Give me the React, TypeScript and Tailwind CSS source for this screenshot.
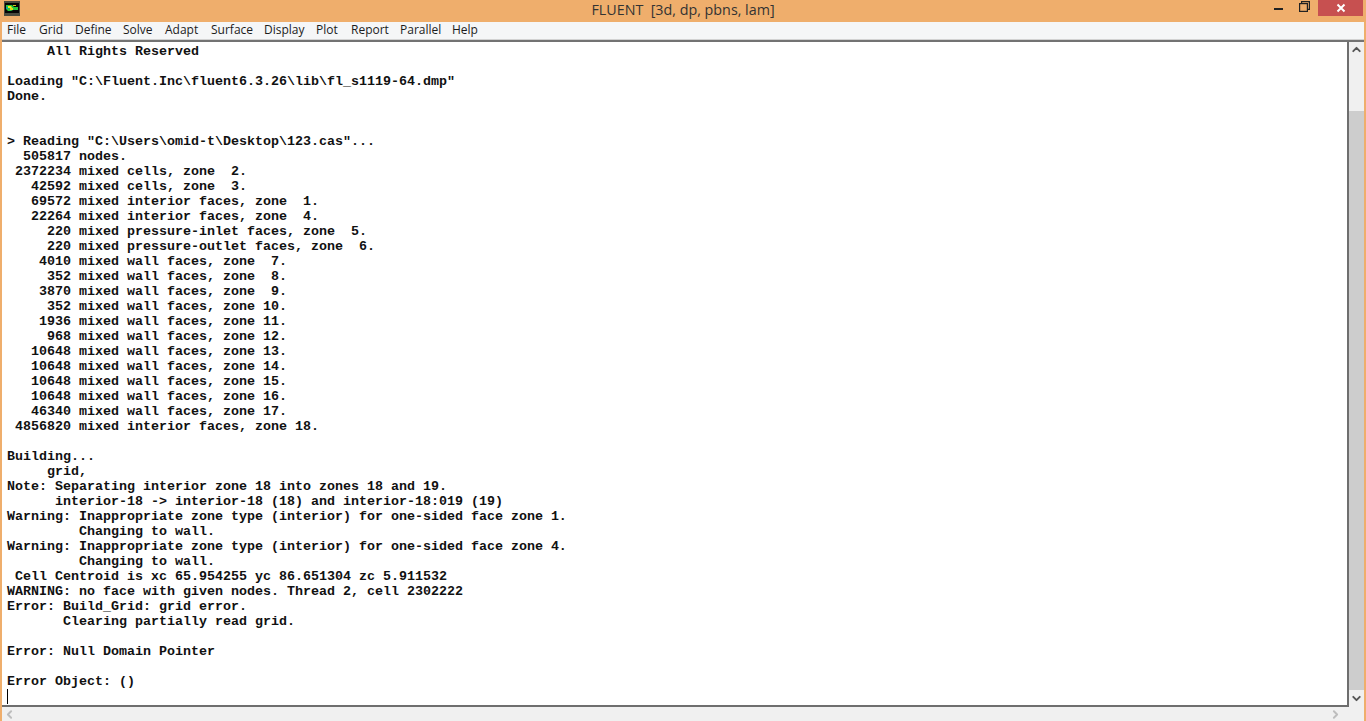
import React from 'react';
import { ChevronUp, ChevronDown, ChevronLeft, ChevronRight } from 'lucide-react';

const menuItems = [
  { label: 'File', width: 'w-[32px]' },
  { label: 'Grid', width: 'w-[36px]' },
  { label: 'Define', width: 'w-[48px]' },
  { label: 'Solve', width: 'w-[42px]' },
  { label: 'Adapt', width: 'w-[46px]' },
  { label: 'Surface', width: 'w-[53px]' },
  { label: 'Display', width: 'w-[52px]' },
  { label: 'Plot', width: 'w-[35px]' },
  { label: 'Report', width: 'w-[49px]' },
  { label: 'Parallel', width: 'w-[52px]' },
  { label: 'Help', width: 'w-[40px]' },
];

const consoleText = `     All Rights Reserved

Loading "C:\\Fluent.Inc\\fluent6.3.26\\lib\\fl_s1119-64.dmp"
Done.


> Reading "C:\\Users\\omid-t\\Desktop\\123.cas"...
  505817 nodes.
 2372234 mixed cells, zone  2.
   42592 mixed cells, zone  3.
   69572 mixed interior faces, zone  1.
   22264 mixed interior faces, zone  4.
     220 mixed pressure-inlet faces, zone  5.
     220 mixed pressure-outlet faces, zone  6.
    4010 mixed wall faces, zone  7.
     352 mixed wall faces, zone  8.
    3870 mixed wall faces, zone  9.
     352 mixed wall faces, zone 10.
    1936 mixed wall faces, zone 11.
     968 mixed wall faces, zone 12.
   10648 mixed wall faces, zone 13.
   10648 mixed wall faces, zone 14.
   10648 mixed wall faces, zone 15.
   10648 mixed wall faces, zone 16.
   46340 mixed wall faces, zone 17.
 4856820 mixed interior faces, zone 18.

Building...
     grid,
Note: Separating interior zone 18 into zones 18 and 19.
      interior-18 -> interior-18 (18) and interior-18:019 (19)
Warning: Inappropriate zone type (interior) for one-sided face zone 1.
         Changing to wall.
Warning: Inappropriate zone type (interior) for one-sided face zone 4.
         Changing to wall.
 Cell Centroid is xc 65.954255 yc 86.651304 zc 5.911532
WARNING: no face with given nodes. Thread 2, cell 2302222
Error: Build_Grid: grid error.
       Clearing partially read grid.

Error: Null Domain Pointer

Error Object: ()`;

function AppIcon() {
  return (
    <svg width="16" height="15" viewBox="0 0 16 15">
      <rect width="16" height="15" fill="#4a4a3e" />
      <rect x="1" y="2" width="14" height="10" fill="#050505" />
      <path d="M2 4h6l2 2h4v3H9L7 10H4L2 8z" fill="#27c93a" />
      <path d="M4 5h3l1 2H4z" fill="#eef01e" />
      <path d="M6 7h3v2H6z" fill="#e0d91a" />
      <path d="M9 4h3v1H9z" fill="#d8c81a" />
      <path d="M2 6h2v2H2z" fill="#12a0a0" />
    </svg>
  );
}

export default function App() {
  return (
    <div className="w-[1366px] h-[721px] overflow-hidden flex flex-col bg-[#efae6c] font-['Liberation_Sans',sans-serif]">
      {/* title bar */}
      <div className="h-[22px] shrink-0 flex items-start">
        <div className="ml-[4px] mt-[1px]">
          <AppIcon />
        </div>
        <div className="flex-1 text-center text-[14.3px] leading-[20px] text-[#333] font-['Open_Sans',sans-serif] pl-[81px]">
          FLUENT &nbsp;[3d, dp, pbns, lam]
        </div>
        <div className="flex items-start">
          <div className="w-[26px] h-[18px] flex items-center justify-center">
            <div className="w-[9px] h-[2px] bg-[#222]" />
          </div>
          <div className="w-[27px] h-[13px] flex items-center justify-center">
            <svg width="11" height="11" viewBox="0 0 11 11" fill="none" stroke="#222" strokeWidth="1.2">
              <rect x="0.6" y="2.6" width="7.8" height="7.8" />
              <path d="M2.6 2.6V0.6h7.8v7.8H8.4" />
            </svg>
          </div>
          <div className="mr-[3px] w-[45px] h-[16px] bg-[#c75050] flex items-center justify-center">
            <svg width="10" height="10" viewBox="0 0 10 10" stroke="#fff" strokeWidth="2">
              <path d="M1.5 1.5l7 7M8.5 1.5l-7 7" />
            </svg>
          </div>
        </div>
      </div>

      <div className="flex-1 min-h-0 mx-[2px] flex flex-col bg-[#f0f0f0] w-[1362px]">
        {/* menu bar */}
        <div className="h-[17px] shrink-0 flex items-center bg-[#f5f6f7] text-[12px] text-[#1c1c1c] font-['Open_Sans',sans-serif] pl-[5px] pb-[2px]">
          {menuItems.map((item) => (
            <div key={item.label} className={`${item.width} shrink-0`}>
              {item.label}
            </div>
          ))}
        </div>
        <div className="h-[1px] shrink-0 bg-[#d2d2d2]" />
        <div className="h-[2px] shrink-0 bg-[#737373]" />

        <div className="flex-1 min-h-0 flex">
          {/* console */}
          <div className="w-[1347px] shrink-0 bg-white border-r-2 border-b-2 border-[#6e6e6e] overflow-hidden pl-[5px]">
            <pre className="font-['Liberation_Mono',monospace] font-bold text-[13.33px] leading-[15px] text-[#111] mt-[1px] pt-[1px] whitespace-pre">
              {consoleText}
            </pre>
            <div className="w-[1px] h-[15px] bg-black" />
          </div>

          {/* vertical scrollbar */}
          <div className="flex-1 flex flex-col items-center">
            <div className="h-[15px] shrink-0 flex items-center">
              <ChevronUp size={13} strokeWidth={3.5} color="#555" />
            </div>
            <div className="h-[54px] shrink-0" />
            <div className="w-full flex-1 bg-[#cdcdcd]" />
            <div className="h-[17px] shrink-0 flex items-center">
              <ChevronDown size={13} strokeWidth={3.5} color="#555" />
            </div>
          </div>
        </div>

        {/* horizontal scrollbar */}
        <div className="h-[14px] shrink-0 flex items-center justify-between pl-[1px] pr-[22px]">
          <ChevronLeft size={13} strokeWidth={3.5} color="#bdbdbd" />
          <ChevronRight size={13} strokeWidth={3.5} color="#bdbdbd" />
        </div>
      </div>
    </div>
  );
}
